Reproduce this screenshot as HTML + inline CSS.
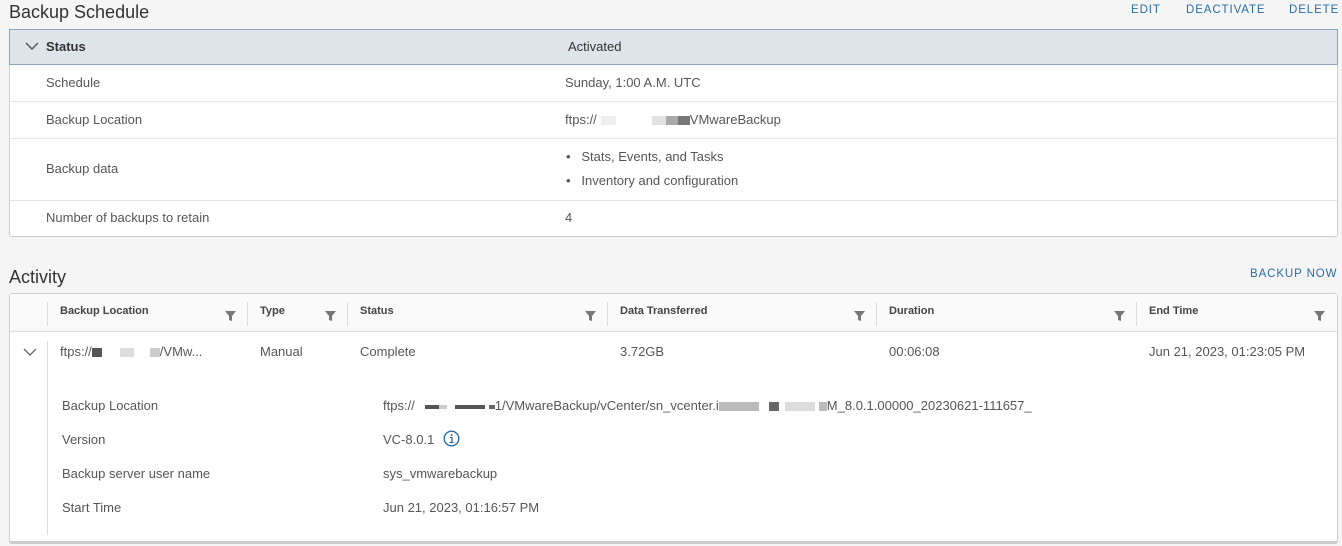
<!DOCTYPE html><html><head><style>
body{margin:0;width:1342px;height:546px;background:#f5f5f5;font-family:"Liberation Sans",sans-serif;color:#565656;position:relative;overflow:hidden;font-size:13px}
.a{position:absolute;white-space:nowrap}
h1{position:absolute;margin:0;font-weight:400;font-size:18px;color:#333}
.lnk{position:absolute;font-size:11.5px;letter-spacing:0.9px;color:#2a6da6;top:4px}
.card{position:absolute;left:9px;width:1327px;background:#fff;border:1px solid #cfcfcf;border-radius:3px}
.hr{position:absolute;left:0;right:0;height:1px;background:#e6e6e6}
.th{position:absolute;top:11px;font-weight:700;font-size:11px;color:#444}
.sep{position:absolute;top:8px;width:1px;height:24px;background:#ddd}
.blk{display:inline-block;height:9px;vertical-align:middle}
</style></head><body>
<h1 style="left:9px;top:2px">Backup Schedule</h1>
<div class="lnk" style="left:1131px">EDIT</div>
<div class="lnk" style="left:1186px">DEACTIVATE</div>
<div class="lnk" style="left:1289px">DELETE</div>
<div class="card" style="top:29px;height:206px">
 <div style="position:absolute;left:0;top:0;right:0;height:34px;background:#dde4ea;border:1px solid #8ba3bb;margin:-1px"></div>
 <svg class="a" style="left:15px;top:11px" width="14" height="10"><path d="M1 2l6 6 6-6" stroke="#555" fill="none" stroke-width="1.4"/></svg>
 <div class="a" style="left:36px;top:9px;font-weight:700;color:#333">Status</div>
 <div class="a" style="left:558px;top:9px;color:#333">Activated</div>
 <div class="a" style="left:36px;top:45px">Schedule</div><div class="a" style="left:555px;top:45px">Sunday, 1:00 A.M. UTC</div>
 <div class="hr" style="top:71px"></div>
 <div class="a" style="left:36px;top:82px">Backup Location</div><div class="a" style="left:555px;top:82px">ftps://<span class="blk" style="width:15px;background:#eee;margin-left:4px"></span><span class="blk" style="width:36px"></span><span class="blk" style="width:14px;background:#e2e2e2"></span><span class="blk" style="width:12px;background:#aaa"></span><span class="blk" style="width:12px;background:#777"></span>VMwareBackup</div>
 <div class="hr" style="top:108px"></div>
 <div class="a" style="left:36px;top:131px">Backup data</div>
 <div class="a" style="left:556px;top:119px">•&nbsp;&nbsp;&nbsp;Stats, Events, and Tasks</div>
 <div class="a" style="left:556px;top:143px">•&nbsp;&nbsp;&nbsp;Inventory and configuration</div>
 <div class="hr" style="top:170px"></div>
 <div class="a" style="left:36px;top:180px">Number of backups to retain</div><div class="a" style="left:555px;top:180px">4</div>
</div>
<h1 style="left:9px;top:267px">Activity</h1>
<div class="lnk" style="left:1250px;top:268px">BACKUP NOW</div>
<div class="card" style="top:293px;height:247px;border-bottom:3px solid #ccc">
 <div style="position:absolute;left:0;top:0;right:0;height:37px;background:#fafafa;border-bottom:1px solid #ddd"></div>
 <div class="sep" style="left:37px"></div><div class="sep" style="left:237px"></div><div class="sep" style="left:337px"></div><div class="sep" style="left:597px"></div><div class="sep" style="left:866px"></div><div class="sep" style="left:1126px"></div>
 <div class="th" style="left:50px">Backup Location</div><div class="th" style="left:250px">Type</div><div class="th" style="left:350px">Status</div><div class="th" style="left:610px">Data Transferred</div><div class="th" style="left:879px">Duration</div><div class="th" style="left:1139px">End Time</div>
 <svg width="0" height="0"><defs><path id="f" d="M0 0h11l-4 5v5l-3-1v-4z" fill="#777"/></defs></svg>
 <svg class="a" style="left:215px;top:17px" width="11" height="10"><use href="#f"/></svg>
 <svg class="a" style="left:315px;top:17px" width="11" height="10"><use href="#f"/></svg>
 <svg class="a" style="left:575px;top:17px" width="11" height="10"><use href="#f"/></svg>
 <svg class="a" style="left:844px;top:17px" width="11" height="10"><use href="#f"/></svg>
 <svg class="a" style="left:1104px;top:17px" width="11" height="10"><use href="#f"/></svg>
 <svg class="a" style="left:1304px;top:17px" width="11" height="10"><use href="#f"/></svg>
 <div style="position:absolute;left:37px;top:47px;width:1px;height:194px;background:#ddd"></div>
 <svg class="a" style="left:13px;top:53px" width="14" height="10"><path d="M1 2l6 6 6-6" stroke="#666" fill="none" stroke-width="1.3"/></svg>
 <div class="a" style="left:50px;top:50px">ftps://<span class="blk" style="width:10px;background:#555"></span><span class="blk" style="width:18px"></span><span class="blk" style="width:14px;background:#ddd"></span><span class="blk" style="width:16px"></span><span class="blk" style="width:10px;background:#ccc"></span>/VMw...</div>
 <div class="a" style="left:250px;top:50px">Manual</div><div class="a" style="left:350px;top:50px">Complete</div><div class="a" style="left:610px;top:50px">3.72GB</div><div class="a" style="left:879px;top:50px">00:06:08</div><div class="a" style="left:1139px;top:50px">Jun 21, 2023, 01:23:05 PM</div>
 <div class="a" style="left:52px;top:104px">Backup Location</div>
 <div class="a" style="left:373px;top:104px">ftps://<span class="blk" style="width:14px;margin-left:10px;height:4px;background:#555"></span><span class="blk" style="width:8px;height:4px;background:#ccc"></span><span class="blk" style="width:30px;height:4px;background:#555;margin-left:8px"></span><span class="blk" style="width:6px;height:4px;background:#666;margin-left:4px"></span>1/VMwareBackup/vCenter/sn_vcenter.i<span class="blk" style="width:40px;background:#bbb"></span><span class="blk" style="width:10px"></span><span class="blk" style="width:10px;background:#666"></span><span class="blk" style="width:30px;background:#ddd;margin-left:6px"></span><span class="blk" style="width:8px;background:#bbb;margin-left:4px"></span>M_8.0.1.00000_20230621-111657_</div>
 <div class="a" style="left:52px;top:138px">Version</div>
 <div class="a" style="left:373px;top:138px">VC-8.0.1</div>
 <svg class="a" style="left:433px;top:136px" width="17" height="17"><circle cx="8.5" cy="8.5" r="7.3" stroke="#2a6da6" stroke-width="1.4" fill="none"/><circle cx="8.5" cy="5" r="1" fill="#2a6da6"/><path d="M7 7.5h2v5M6.5 12.5h4" stroke="#2a6da6" stroke-width="1.3" fill="none"/></svg>
 <div class="a" style="left:52px;top:172px">Backup server user name</div><div class="a" style="left:373px;top:172px">sys_vmwarebackup</div>
 <div class="a" style="left:52px;top:206px">Start Time</div><div class="a" style="left:373px;top:206px">Jun 21, 2023, 01:16:57 PM</div>
</div>
</body></html>
